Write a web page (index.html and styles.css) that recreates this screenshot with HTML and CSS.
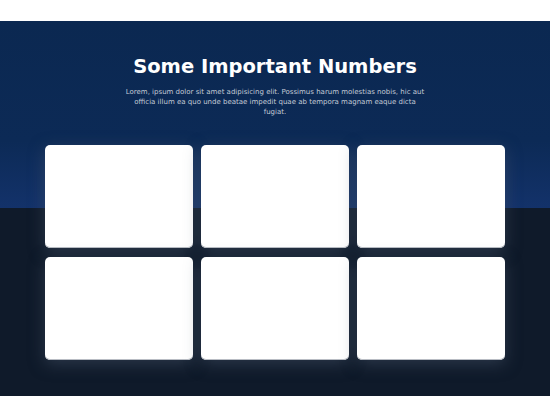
FILE: index.html
```html
<!DOCTYPE html>
<html lang="en">
<head>
  <meta charset="UTF-8" />
  <meta name="viewport" content="width=device-width, initial-scale=1.0" />
  <title>Some Important Numbers</title>
  <link rel="stylesheet" href="styles.css">
</head>
<body>
  <section class="stats">
    <div class="stats-head">
      <h2>Some Important Numbers</h2>
      <p>
        Lorem, ipsum dolor sit amet adipisicing elit. Possimus harum molestias nobis, hic aut
        officia illum ea quo unde beatae impedit quae ab tempora magnam eaque dicta fugiat.
      </p>
    </div>
    <div class="stats-grid">
      <div class="stat-card"></div>
      <div class="stat-card"></div>
      <div class="stat-card"></div>
      <div class="stat-card"></div>
      <div class="stat-card"></div>
      <div class="stat-card"></div>
    </div>
  </section>
</body>
</html>
```

FILE: styles.css
```css
body {
  margin: 0;
  padding: 21px 0 20px;
  background: #fff;
  font-family: 'DejaVu Sans', sans-serif;
}

/* blue top half, dark bottom half */
.stats {
  background: linear-gradient(to bottom, #0b2851 0, #0c2a56 120px, #13326a 187px, #0f1a2a 187px, #0f1a2a 100%);
  padding: 34px 45px 36px;
}

.stats-head {
  text-align: center;
  max-width: 306px;
  margin: 0 auto 28px;
}

.stats-head h2 {
  margin: 0 0 8px;
  font-size: 19.5px;
  line-height: 24px;
  font-weight: bold;
  color: #fff;
}

.stats-head p {
  margin: 0;
  font-size: 7px;
  line-height: 10px;
  color: #c3cad6;
}

.stats-grid {
  display: grid;
  grid-template-columns: repeat(3, 1fr);
  gap: 9px 8px;
}

.stat-card {
  height: 103px;
  background: #fff;
  border-radius: 5px;
  box-shadow: inset 0 -1px 0 #b9bdc4, 0 4px 16px rgba(71, 85, 105, 0.5);
}
```
